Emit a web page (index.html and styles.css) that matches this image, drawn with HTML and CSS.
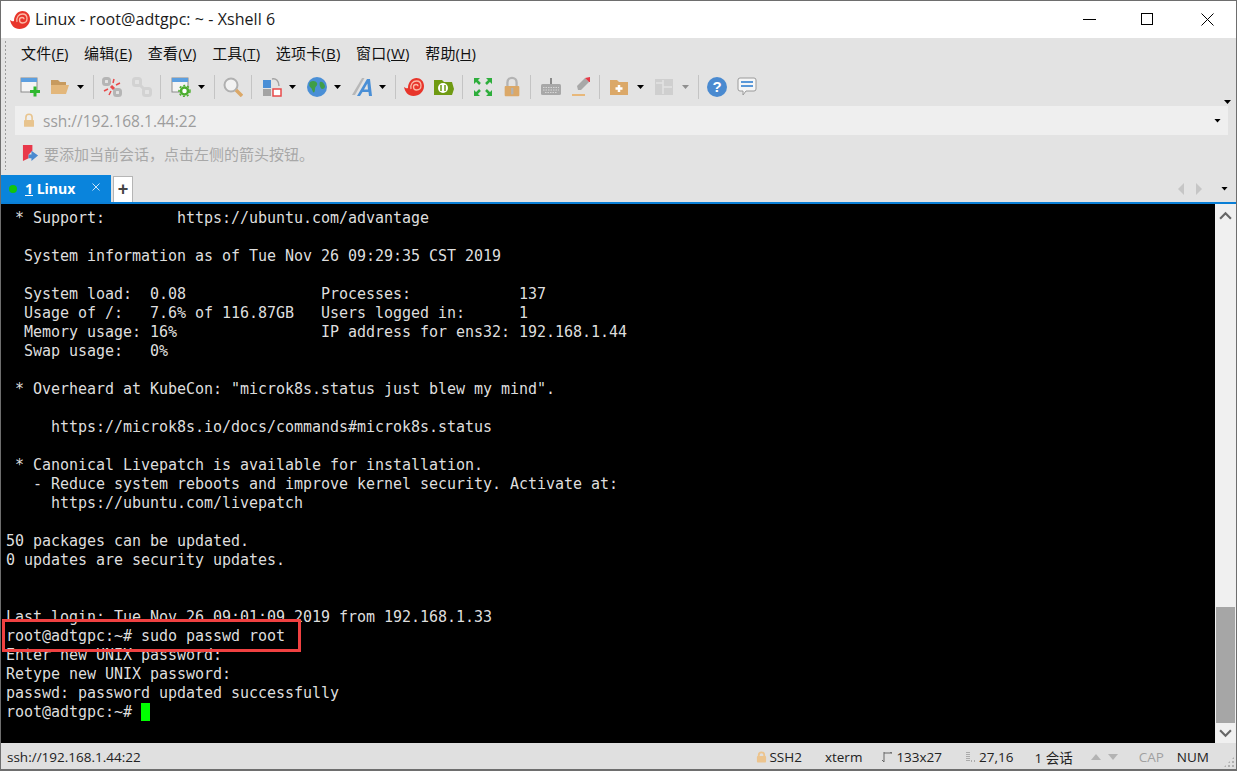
FILE: index.html
```html
<!DOCTYPE html>
<html lang="zh">
<head>
<meta charset="utf-8">
<title>Linux - root@adtgpc: ~ - Xshell 6</title>
<link rel="stylesheet" href="styles.css">
</head>
<body>
<svg class="defs" width="0" height="0">
  <defs>
    <symbol id="shell" viewBox="0 0 20 20">
      <path d="M0 10c2 1.500 3 1.500 4 1C4 5 8 1 12.500 1 16.500 1 20 4 20 9c0 6-5 10-10.500 10C4 19 1 15 0 10z" fill="#e8352b"/>
      <path d="M7 12C6 7 9 4 12.500 4c3 0 4.500 2 4.500 4.500 0 3-2 4.500-4.500 4.500-2 0-3-1.500-3-3 0-1.500 1-2.500 2.500-2.500 1.200 0 2 .8 2 1.800" fill="none" stroke="#fbb9a6" stroke-width="1.300"/>
    </symbol>
    <symbol id="lock" viewBox="0 0 18 24">
      <path d="M4 11V7a5 5 0 0 1 10 0v4" fill="none" stroke="#b3b3b3" stroke-width="2.500"/>
      <rect x="1" y="11" width="16" height="11" rx="1" fill="#dba868"/>
      <rect x="8" y="13" width="2.500" height="7" fill="#b3b3b3"/>
    </symbol>
  </defs>
</svg>
<div class="window">
  <header class="titlebar">
    <svg class="title-logo"><use href="#shell"/></svg>
    <span class="title-text">Linux - root@adtgpc: ~ - Xshell 6</span>
    <div class="win-controls">
      <svg class="win-btn" viewBox="0 0 14 14"><path d="M0 6.500h13" stroke="#000" fill="none"/></svg>
      <svg class="win-btn win-max" viewBox="0 0 14 14"><rect x=".5" y=".5" width="11" height="11" stroke="#000" fill="none"/></svg>
      <svg class="win-btn win-close" viewBox="0 0 14 14"><path d="M.5.500l12 12M12.500.500l-12 12" stroke="#000" fill="none"/></svg>
    </div>
  </header>

  <div class="chrome">
    <div class="grip"></div>
    <div class="bars">
      <nav class="menubar">
        <span>文件(<u>F</u>)</span><span>编辑(<u>E</u>)</span><span>查看(<u>V</u>)</span><span>工具(<u>T</u>)</span><span>选项卡(<u>B</u>)</span><span>窗口(<u>W</u>)</span><span>帮助(<u>H</u>)</span>
      </nav>
      <div class="toolbar">
        <svg class="ic" viewBox="0 0 20 20"><rect x="1" y="1" width="16" height="14" fill="#f4f4f4" stroke="#8c8c8c"/><rect x="1" y="1" width="16" height="4" fill="#5c9fe0"/><path d="M15 9.500v10M10 14.500h10" stroke="#2eb82e" stroke-width="3"/></svg>
        <svg class="ic" viewBox="0 0 20 20"><path d="M1 3h7l2 2h6v3H1z" fill="#c79a5e"/><path d="M1 17V8h18l-3 9z" fill="#e3b77b"/></svg>
        <i class="dd"></i><i class="sep"></i>
        <svg class="ic" viewBox="0 0 20 20"><g fill="none" stroke="#b5b5b5" stroke-width="3"><rect x="1.500" y="1.500" width="6" height="6" rx="2"/><rect x="12.500" y="12.500" width="6" height="6" rx="2"/></g><path d="M9 9l3 3" stroke="#e84a4a" stroke-width="3"/><path d="M12 2l-1 4M18 6l-4 2M2 14l4-2M7 18l2-4" stroke="#e84a4a" stroke-width="1.500"/></svg>
        <svg class="ic" viewBox="0 0 20 20"><g fill="none" stroke="#d2d2d2" stroke-width="3"><rect x="1.500" y="1.500" width="7" height="7" rx="2"/><rect x="11.500" y="11.500" width="7" height="7" rx="2"/><path d="M7 7l6 6"/></g></svg>
        <i class="sep sep-i"></i>
        <svg class="ic" viewBox="0 0 20 20"><rect x="1" y="1" width="16" height="14" fill="#f4f4f4" stroke="#8c8c8c"/><rect x="1" y="1" width="16" height="4" fill="#5c9fe0"/><circle cx="13.500" cy="14" r="3.500" fill="#fff" stroke="#4cae2e" stroke-width="2.500"/><circle cx="13.500" cy="14" r="5.500" fill="none" stroke="#4cae2e" stroke-width="1.500" stroke-dasharray="2 2"/></svg>
        <i class="dd"></i><i class="sep"></i>
        <svg class="ic" viewBox="0 0 20 20"><circle cx="8" cy="8" r="6.500" fill="#f2f2f2" stroke="#b0b0b0" stroke-width="2"/><path d="M13 13l6 6" stroke="#dba868" stroke-width="3.500"/></svg>
        <i class="sep sep-i"></i>
        <svg class="ic" viewBox="0 0 20 20"><rect x="1" y="3" width="8" height="8" fill="#4a8fd6"/><rect x="1" y="12" width="8" height="7" fill="#a3a3a3"/><rect x="11" y="12" width="8" height="7" fill="#fff" stroke="#e84a4a" stroke-width="1.500"/><path d="M10 2c4-1 7 2 7 7" fill="none" stroke="#a3a3a3" stroke-width="1.500"/></svg>
        <i class="dd"></i>
        <svg class="ic" viewBox="0 0 20 20"><circle cx="10" cy="10" r="10" fill="#4a8fd6"/><path d="M3 5c3-2 6-1 7 1 1 3-2 3-2 6 0 3-1 4-2 3-1-2-1-4-3-5-1-1-1-3 0-5zM13 5c2-1 4 1 5 4 0 2-1 3-3 3-2-1-3-5-2-7z" fill="#3f9e48"/></svg>
        <i class="dd"></i>
        <svg class="ic" viewBox="0 0 20 20"><path d="M0 18L10 1h2.500L3 18z" fill="#b8b8b8"/><path d="M5 19L15 2h3l2 17h-3l-.5-4h-6L8 19zM12 12.500h4l-.6-6z" fill="#4a8fd6"/></svg>
        <i class="dd"></i><i class="sep"></i>
        <svg class="ic"><use href="#shell"/></svg>
        <svg class="ic" viewBox="0 0 20 20"><path d="M0 3h8l2 2h8l2 7-2 6H0z" fill="#6f9a12"/><circle cx="9" cy="11" r="5" fill="#fff"/><path d="M7 8v6M11 14V8" stroke="#6f9a12" stroke-width="1.500"/></svg>
        <i class="sep sep-i"></i>
        <svg class="ic" viewBox="0 0 20 20"><path d="M1 1h6L1 7zM19 1h-6l6 6zM1 19h6l-6-6zM19 19h-6l6-6z" fill="#2eae3c"/><path d="M3 3l4 4M17 3l-4 4M3 17l4-4M17 17l-4-4" stroke="#2eae3c" stroke-width="2.500"/></svg>
        <svg class="ic ic-lock" viewBox="0 0 18 24"><use href="#lock"/></svg>
        <i class="sep sep-i"></i>
        <svg class="ic" viewBox="0 0 20 20"><rect x="0" y="7" width="20" height="11" rx="1.500" fill="#a8a8a8"/><path d="M10 1v6" stroke="#8a8a8a" stroke-width="2"/><path d="M2 10.500h16M2 13h16M4 15.500h12" stroke="#d6d6d6" stroke-dasharray="1.500 1"/></svg>
        <svg class="ic" viewBox="0 0 20 20"><path d="M7 13l-1-4 8-8 4 4-8 8z" fill="#a8a8a8"/><path d="M14 1l5-1v5l-1 0z" fill="#e63946"/><path d="M1 18h13" stroke="#e8b87a" stroke-width="2"/></svg>
        <i class="sep sep-i"></i>
        <svg class="ic ic-folder" viewBox="0 0 18 18"><path d="M0 2h7l2 2h9v13H0z" fill="#dba868"/><path d="M9 7v7M5.500 10.500h7" stroke="#fff" stroke-width="2.500"/></svg>
        <i class="dd"></i>
        <svg class="ic ic-folder" viewBox="0 0 18 18"><rect x="0" y="1" width="18" height="16" fill="#cfcfcf"/><path d="M8 2v14M8 9h9M1 5h7" stroke="#e3e3e3" stroke-width="1.500"/></svg>
        <i class="dd dd-off"></i><i class="sep"></i>
        <svg class="ic" viewBox="0 0 20 20"><circle cx="10" cy="10" r="10" fill="#4a8ad0"/><text x="10" y="15" class="help-mark">?</text></svg>
        <svg class="ic" viewBox="0 0 20 20"><path d="M3 1h14a2 2 0 0 1 2 2v9a2 2 0 0 1-2 2H9l-3 4v-4H3a2 2 0 0 1-2-2V3a2 2 0 0 1 2-2z" fill="#f6f6f6" stroke="#9a9a9a"/><path d="M4 5h12M4 9h12" stroke="#5a98d8" stroke-width="2"/></svg>
        <i class="dd dd-end"></i>
      </div>
      <div class="address">
        <svg class="addr-lock" viewBox="0 0 18 24"><path d="M4 11V7a5 5 0 0 1 10 0v4" fill="none" stroke="#e8c48e" stroke-width="2.500"/><rect x="1" y="11" width="16" height="11" rx="1" fill="#e8c48e"/></svg>
        <span class="addr-text">ssh://192.168.1.44:22</span>
        <i class="dd"></i>
      </div>
      <div class="hint">
        <svg class="hint-ic" viewBox="0 0 18 18"><path d="M1 0h10v6L7 10v4L1 17z" fill="#e8384a"/><path d="M7 10h3V6l7 5-7 6v-3H7z" fill="#4a8ad0"/></svg>
        <span>要添加当前会话，点击左侧的箭头按钮。</span>
      </div>
    </div>
  </div>

  <div class="tabbar">
    <div class="tab">
      <i class="tab-dot"></i>
      <b class="tab-name"><u>1</u> Linux</b>
      <svg class="tab-close" viewBox="0 0 8 8"><path d="M.5.500l7 7M7.500.500l-7 7" stroke="#cfe6f8" fill="none"/></svg>
    </div>
    <div class="tab-add">+</div>
    <div class="tab-nav">
      <i class="nav-left"></i><i class="nav-right"></i><i class="dd"></i>
    </div>
  </div>

  <main class="term-wrap">
<pre class="terminal"> * Support:        https://ubuntu.com/advantage

  System information as of Tue Nov 26 09:29:35 CST 2019

  System load:  0.08               Processes:            137
  Usage of /:   7.6% of 116.87GB   Users logged in:      1
  Memory usage: 16%                IP address for ens32: 192.168.1.44
  Swap usage:   0%

 * Overheard at KubeCon: "microk8s.status just blew my mind".

     https://microk8s.io/docs/commands#microk8s.status

 * Canonical Livepatch is available for installation.
   - Reduce system reboots and improve kernel security. Activate at:
     https://ubuntu.com/livepatch

50 packages can be updated.
0 updates are security updates.


Last login: Tue Nov 26 09:01:09 2019 from 192.168.1.33
root@adtgpc:~# sudo passwd root
Enter new UNIX password:
Retype new UNIX password:
passwd: password updated successfully
root@adtgpc:~# <span class="cursor"> </span></pre>
    <div class="scrollbar">
      <svg class="sb-arrow sb-up" viewBox="0 0 12 8"><path d="M1 7l5-5 5 5" fill="none" stroke="#666" stroke-width="2"/></svg>
      <div class="sb-track"><div class="sb-thumb"></div></div>
      <svg class="sb-arrow sb-down" viewBox="0 0 12 8"><path d="M1 1l5 5 5-5" fill="none" stroke="#666" stroke-width="2"/></svg>
    </div>
    <div class="highlight"></div>
  </main>

  <footer class="statusbar">
    <span class="st-path">ssh://192.168.1.44:22</span>
    <svg class="st-lock" viewBox="0 0 12 12"><path d="M3 5V4a3 3 0 0 1 6 0v1" fill="none" stroke="#ecc48e" stroke-width="2"/><rect x="1" y="5" width="10" height="7" rx="1" fill="#ecc48e"/></svg>
    <span class="st-ssh">SSH2</span>
    <span class="st-term">xterm</span>
    <svg class="st-ic" viewBox="0 0 10 10"><path d="M2 0v10M0 8l2 2M2 1h8M8 0l2 1" stroke="#666" fill="none"/></svg>
    <span class="st-size">133x27</span>
    <svg class="st-ic st-ic2" viewBox="0 0 10 10"><path d="M1 0v9M3 0v9M5 9h1M8 9h1" stroke="#777" fill="none" stroke-dasharray="1 1"/></svg>
    <span class="st-pos">27,16</span>
    <span class="st-count">1 会话</span>
    <i class="arrow-up"></i><i class="arrow-down"></i>
    <span class="st-cap">CAP</span>
    <span class="st-num">NUM</span>
    <i class="st-grip"></i>
  </footer>
</div>
</body>
</html>
```
FILE: styles.css
```css
* { box-sizing: border-box; }
html, body { margin: 0; padding: 0; overflow: hidden; }
body { width: 1237px; height: 771px; font-family: "Open Sans", "Noto Sans CJK SC", sans-serif; }
.defs { display: block; height: 0; }

.window {
  width: 1237px; height: 771px; display: flex; flex-direction: column;
  background: #e3e3e3;
  border: 1px solid #6e6e6e; border-width: 1px 1px 2px 1px;
}

.titlebar { height: 37px; background: #fff; display: flex; align-items: center; padding-left: 9px; flex: none; }
.title-logo { width: 20px; height: 20px; margin-right: 5px; }
.title-text { font-size: 16px; letter-spacing: 0.06px; color: #1a1a1a; padding-bottom: 1px; }
.win-controls { margin-left: auto; display: flex; align-items: center; }
.win-btn { width: 14px; height: 14px; }
.win-max { margin-left: 44px; }
.win-close { margin-left: 46px; margin-right: 21px; }

.chrome { display: flex; height: 137px; flex: none; }
.grip { width: 14px; flex: none; margin: 2px 0 5px; background: radial-gradient(circle, #9a9a9a 0.8px, transparent 1px) 3px 0 / 3px 4px repeat-y; }
.bars { flex: 1; display: flex; flex-direction: column; min-width: 0; }

.menubar { height: 32px; display: flex; align-items: center; padding: 0 0 3px 6px; font-size: 15px; letter-spacing: 0.2px; color: #111; flex: none; }
.menubar span { margin-right: 15.500px; }
.menubar u { text-underline-offset: 1px; }

.toolbar { height: 36px; display: flex; align-items: center; padding: 0 0 2px 5px; flex: none; position: relative; }
.ic { width: 20px; height: 20px; margin-right: 10px; flex: none; }
.ic-lock { width: 18px; height: 22px; margin-right: 11px; }
.ic-folder { width: 18px; height: 18px; margin-right: 12px; }
.help-mark { font: bold 15px "Liberation Sans", sans-serif; fill: #fff; text-anchor: middle; }
.sep { width: 1px; height: 24px; background: #c4c4c4; margin: 0 8px 0 -2px; flex: none; }
.sep-i { margin-right: 10px; }
.dd { width: 7px; height: 4px; flex: none; background: #000; clip-path: polygon(0 0, 100% 0, 50% 100%); margin: 0 11px 0 -3px; }
.dd-off { background: #8f8f8f; }
.dd-end { position: absolute; right: 5px; bottom: 2px; margin: 0; }

.address {
  height: 29px; margin-right: 8px; background: #efefef; display: flex; align-items: center;
  padding-left: 8px; flex: none;
}
.addr-lock { width: 12px; height: 15px; margin-right: 8px; }
.addr-text { font-size: 15.500px; color: #9d9d9d; padding-top: 1px; }
.address .dd { margin: 0 7px 0 auto; }

.hint { height: 40px; display: flex; align-items: center; padding: 0 0 3px 7px; font-size: 15px; color: #a8a8a8; }
.hint-ic { width: 17px; height: 17px; margin-right: 5px; }

.tabbar { display: flex; align-items: flex-end; border-bottom: 2px solid #0a7fd6; flex: none; box-sizing: content-box; height: 27px; }
.tab { width: 110px; height: 27px; background: #0a84dc; color: #fff; display: flex; align-items: center; padding-left: 8px; }
.tab-dot { width: 8px; height: 8px; border-radius: 50%; background: #12c40c; margin-right: 8px; }
.tab-name { font-size: 14px; font-weight: 700; }
.tab-close { width: 8px; height: 8px; margin-left: 17px; margin-top: -4px; }
.tab-add { width: 20px; height: 26px; margin-left: 2px; background: #fff; border: 1px solid #b5b5b5; border-bottom: 0; color: #444; font: bold 18px/24px "Liberation Sans", sans-serif; text-align: center; }
.tab-nav { margin-left: auto; display: flex; align-items: center; height: 27px; }
.nav-left, .nav-right { width: 0; height: 0; border: 6px solid transparent; }
.nav-left { border-right-color: #c6c6c6; border-left: 0; margin-right: 12px; }
.nav-right { border-left-color: #c6c6c6; border-right: 0; margin-right: 19px; }
.tab-nav .dd { margin: 0 8px 0 0; }

.term-wrap { flex: 1; display: flex; position: relative; min-height: 0; background: #000; }
.terminal {
  flex: 1; margin: 0; padding: 5px 0 0 5px; color: #dedede; background: #000;
  font: 15px/19px "DejaVu Sans Mono", monospace; letter-spacing: -0.03px; overflow: hidden;
}
.cursor { display: inline-block; width: 9px; height: 18px; background: #00ff00; vertical-align: top; }
.scrollbar { width: 21px; background: #f0f0f0; display: flex; flex-direction: column; align-items: center; flex: none; }
.sb-arrow { width: 13px; height: 9px; flex: none; }
.sb-up { margin: 7px 0; }
.sb-down { margin: 6px 0 5px; }
.sb-track { flex: 1; width: 100%; display: flex; align-items: flex-end; padding-left: 1px; }
.sb-thumb { width: 19px; height: 116px; background: #a6a6a6; }
.highlight { position: absolute; left: 1px; top: 415px; width: 299px; height: 33px; border: 3px solid #f04141; }

.statusbar { height: 26px; padding-top: 2px; flex: none; background: #e0e0e0; display: flex; align-items: center; font-size: 13.500px; color: #222; position: relative; }
.st-path { margin-left: 6px; }
.st-lock { width: 11px; height: 12px; margin-left: auto; margin-right: 2px; }
.st-ssh { margin-right: 23px; }
.st-term { margin-right: 20px; }
.st-ic { width: 10px; height: 10px; margin-right: 4px; }
.st-size { margin-right: 24px; }
.st-ic2 { margin-right: 3px; }
.st-pos { margin-right: 21px; }
.st-count { margin-right: 18px; }
.arrow-up, .arrow-down { width: 0; height: 0; border: 5px solid transparent; }
.arrow-up { border-bottom: 6px solid #b3b3b3; border-top: 0; margin-right: 7px; }
.arrow-down { border-top: 6px solid #b3b3b3; border-bottom: 0; margin-right: 21px; }
.st-cap { color: #a0a0a0; margin-right: 13px; }
.st-num { margin-right: 27px; }
.st-grip { position: absolute; right: 1px; bottom: 1px; width: 12px; height: 12px; background: radial-gradient(circle, #b0b0b0 1.200px, transparent 1.400px) 0 0 / 4px 4px; clip-path: polygon(100% 0, 100% 100%, 0 100%); }
```
